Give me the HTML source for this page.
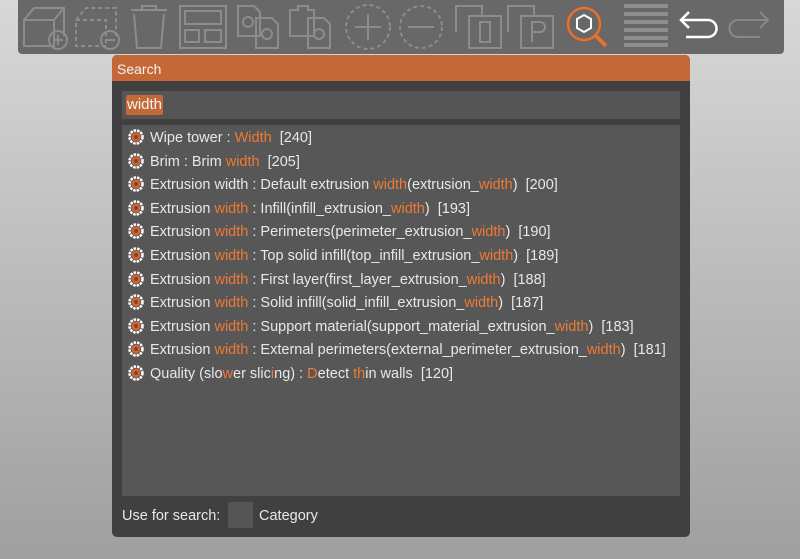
<!DOCTYPE html>
<html><head><meta charset="utf-8"><style>
*{margin:0;padding:0;box-sizing:border-box}
body{width:800px;height:559px;overflow:hidden;background:linear-gradient(#d8d8d8,#9f9f9f);font-family:"Liberation Sans",sans-serif;position:relative}
#tb{position:absolute;left:18px;top:0;width:766px;height:54px;background:#686868;border-radius:0 0 4px 4px}
#tb svg{position:absolute;top:0}
#dlg{position:absolute;left:112px;top:55px;width:578px;height:482px;background:#404040;border-radius:5px;overflow:hidden}
#title{height:26px;background:#c56838;color:#f2f2f2;font-size:14px;line-height:28px;padding-left:5px}
#inp{position:absolute;left:10px;top:36px;width:558px;height:28px;background:#555}
#inp span{position:absolute;left:4px;top:4px;background:#c56838;color:#f4f4f4;font-size:15px;line-height:20px;padding:0 1px;border-radius:2px}
#list{position:absolute;left:10px;top:70px;width:558px;height:371px;background:#575757}
.r{position:absolute;left:6px;height:20px;font-size:14.5px;line-height:20px;color:#e8e8e8;white-space:pre}
.r svg{vertical-align:-3px;margin-right:6px}
.o{color:#ef7a33}
.bot{position:absolute;left:10px;top:448px;font-size:14.5px;color:#e8e8e8;line-height:26px}
#cb{position:absolute;left:116px;top:447px;width:25px;height:26px;background:#555}
</style></head><body>
<div id="tb">
<svg width="766" height="54" fill="none" stroke="#8c8c8c" stroke-width="2">
<g><path d="M6 20 L16 8 H46 V36 M6 20 H36 V46 H6 Z M36 20 L46 8"/><circle cx="40" cy="40" r="9"/><path d="M40 35v10M35 40h10"/></g>
<g stroke-dasharray="4 3"><path d="M58 20 L68 8 H98 V36 M58 20 H88 V46 H58 Z"/></g><circle cx="92" cy="40" r="9"/><path d="M87 40h10"/>
<g transform="translate(-18,0)"><path d="M131 10h36M134 14l3 34h24l3-34M142 10v-4h14v4"/></g>
<rect x="162" y="6" width="46" height="42"/><rect x="167" y="11" width="36" height="13"/><rect x="167" y="30" width="14" height="12"/><rect x="187" y="30" width="16" height="12"/>
<path d="M220 6h16l6 6v24h-22z"/><circle cx="230" cy="22" r="5"/><path d="M238 18h16l6 6v24h-22z"/><circle cx="249" cy="34" r="5"/>
<path d="M272 10h8v-4h10v4h6v26h-24z"/><path d="M290 18h16l6 6v24h-22z"/><circle cx="301" cy="34" r="5"/>
<circle cx="350" cy="27" r="22" stroke-dasharray="4 3"/><path d="M350 14v26M337 27h26"/>
<circle cx="403" cy="27" r="21" stroke-dasharray="4 3"/><path d="M390 27h26"/>
<path d="M438 32V6h26v10"/><rect x="451" y="16" width="32" height="32"/><path d="M462 22h10v20h-10z"/>
<path d="M490 32V6h26v10"/><rect x="503" y="16" width="32" height="32"/><path d="M514 42V22h8a5 5 0 0 1 0 10h-8"/>
<circle cx="566" cy="24" r="16" stroke="#e96f2a" stroke-width="2.5"/><path d="M578 36l10 10" stroke="#e96f2a" stroke-width="4"/><path d="M566 15l7 4v9l-7 4-7-4v-9z" stroke="#fff"/>
<path d="M606 6h44M606 14h44M606 22h44M606 30h44M606 38h44M606 45h44" stroke="#8e8e8e" stroke-width="4"/>
<path d="M668 18l-8 8 8 8M660 26h27a8 8 0 0 1 0 17h-22" stroke="#fff" stroke-width="2.5" transform="translate(3,-6)"/>
<path d="M758 12l8 8-8 8M766 20h-30a8 8 0 0 0 0 17h22" stroke="#888" transform="translate(-16,0)"/>
</svg>
</div>
<div id="dlg">
<div id="title">Search</div>
<div id="inp"><span>width</span></div>
<div id="list">
<svg width="0" height="0" style="position:absolute"><defs><g id="ic"><circle cx="8" cy="8" r="6.5" fill="none" stroke="#fff" stroke-width="2.5" stroke-dasharray="2.5 1"/><circle cx="8" cy="8" r="4.5" fill="#d9632a"/><circle cx="8" cy="8" r="2" fill="#6a4a3a"/></g></defs></svg>
<div class="r" style="top:3px"><svg width="16" height="16"><use href="#ic"/></svg>Wipe tower : <span class="o">Width</span>  [240]</div>
<div class="r" style="top:26.6px"><svg width="16" height="16"><use href="#ic"/></svg>Brim : Brim <span class="o">width</span>  [205]</div>
<div class="r" style="top:50.2px"><svg width="16" height="16"><use href="#ic"/></svg>Extrusion width : Default extrusion <span class="o">width</span>(extrusion_<span class="o">width</span>)  [200]</div>
<div class="r" style="top:73.8px"><svg width="16" height="16"><use href="#ic"/></svg>Extrusion <span class="o">width</span> : Infill(infill_extrusion_<span class="o">width</span>)  [193]</div>
<div class="r" style="top:97.4px"><svg width="16" height="16"><use href="#ic"/></svg>Extrusion <span class="o">width</span> : Perimeters(perimeter_extrusion_<span class="o">width</span>)  [190]</div>
<div class="r" style="top:121px"><svg width="16" height="16"><use href="#ic"/></svg>Extrusion <span class="o">width</span> : Top solid infill(top_infill_extrusion_<span class="o">width</span>)  [189]</div>
<div class="r" style="top:144.6px"><svg width="16" height="16"><use href="#ic"/></svg>Extrusion <span class="o">width</span> : First layer(first_layer_extrusion_<span class="o">width</span>)  [188]</div>
<div class="r" style="top:168.2px"><svg width="16" height="16"><use href="#ic"/></svg>Extrusion <span class="o">width</span> : Solid infill(solid_infill_extrusion_<span class="o">width</span>)  [187]</div>
<div class="r" style="top:191.8px"><svg width="16" height="16"><use href="#ic"/></svg>Extrusion <span class="o">width</span> : Support material(support_material_extrusion_<span class="o">width</span>)  [183]</div>
<div class="r" style="top:215.4px"><svg width="16" height="16"><use href="#ic"/></svg>Extrusion <span class="o">width</span> : External perimeters(external_perimeter_extrusion_<span class="o">width</span>)  [181]</div>
<div class="r" style="top:239px"><svg width="16" height="16"><use href="#ic"/></svg>Quality (slo<span class="o">w</span>er slic<span class="o">i</span>ng) : <span class="o">D</span>etect <span class="o">th</span>in walls  [120]</div>
</div>
<div class="bot">Use for search:</div>
<div id="cb"></div>
<div class="bot" style="left:147px">Category</div>
</div>
</body></html>
